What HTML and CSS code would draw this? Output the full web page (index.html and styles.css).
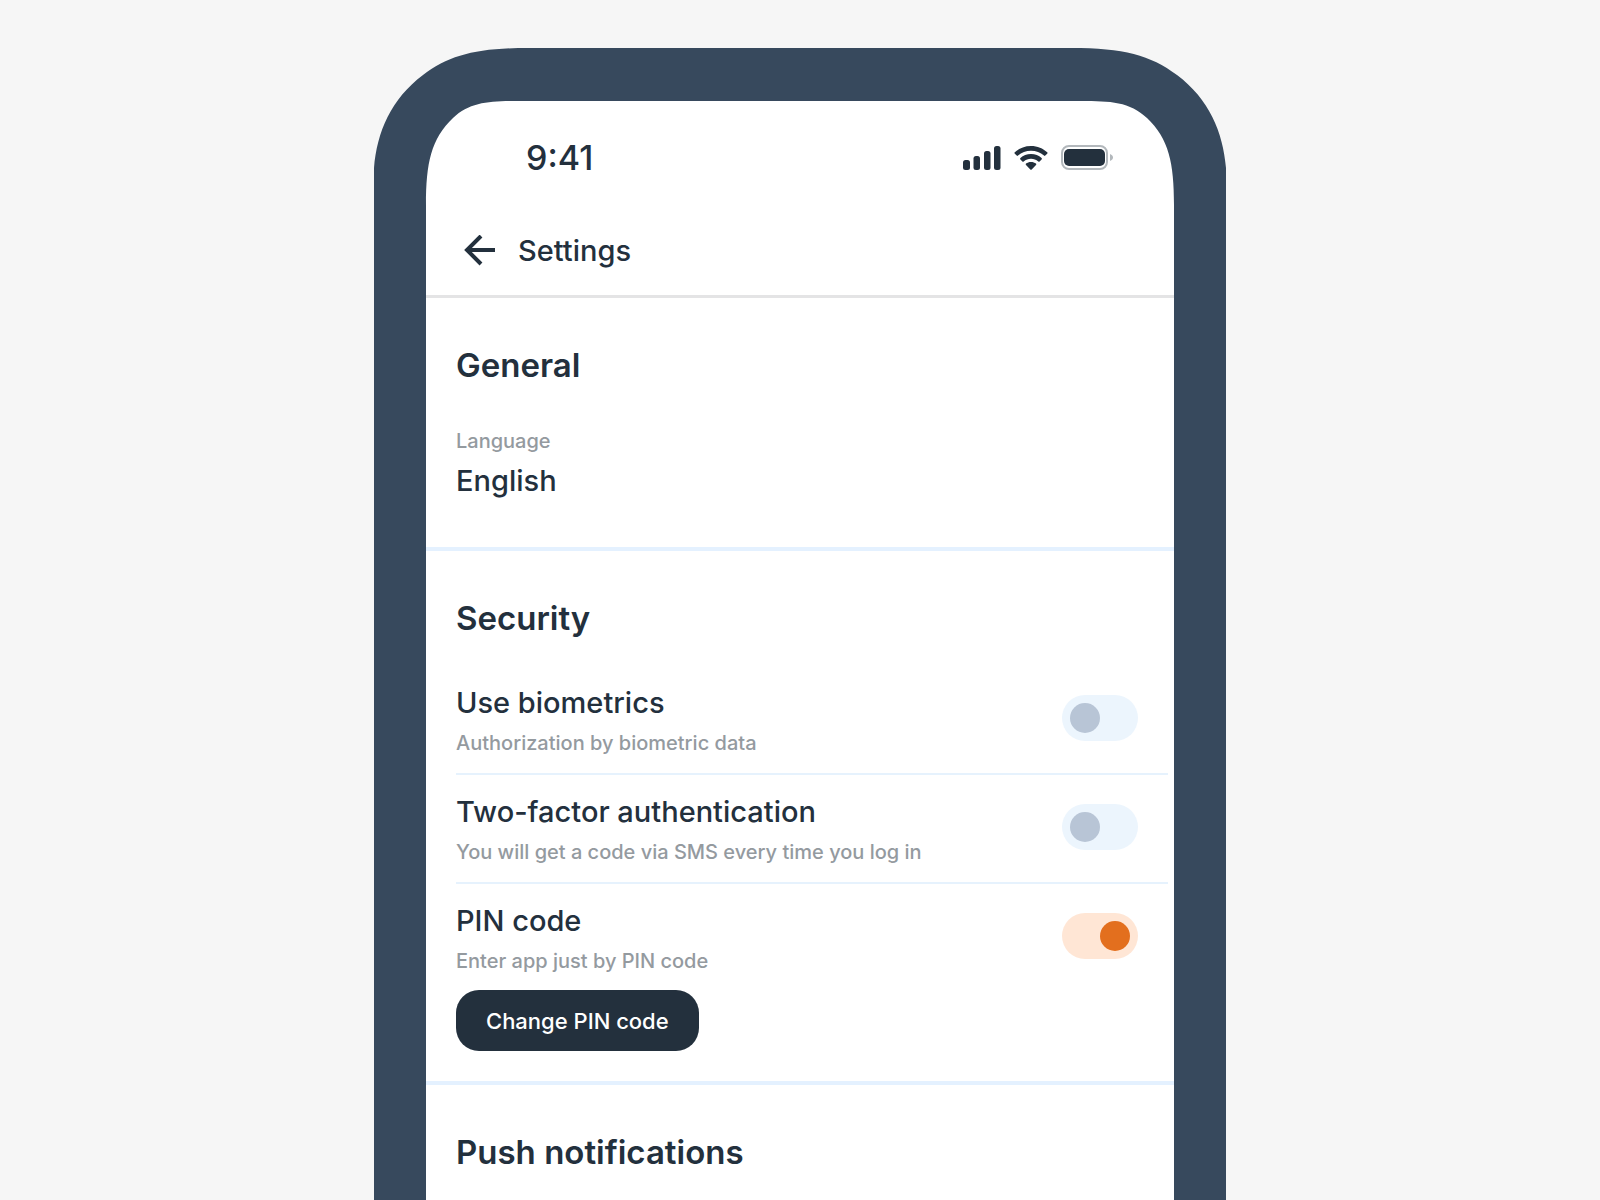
FILE: index.html
```html
<!DOCTYPE html>
<html lang="en">
<head>
    <meta charset="UTF-8">
    <meta name="viewport" content="width=device-width, initial-scale=1.0">
    <title>Settings</title>
    <link rel="stylesheet" href="styles.css">
</head>
<body>
    <div class="phone">
        <svg class="corner" viewBox="0 0 160 160" aria-hidden="true">
            <path class="corner-case" d="M0 160V120C3 84 17 51 49 27C76 7 102 0 155 0H160V53H155C120 53 98 52 79 70C57 91 52 115 52 157V160Z"/>
        </svg>
        <svg class="corner corner-right" viewBox="0 0 160 160" aria-hidden="true">
            <path class="corner-case" d="M0 160V120C3 84 17 51 49 27C76 7 102 0 155 0H160V53H155C120 53 98 52 79 70C57 91 52 115 52 157V160Z"/>
        </svg>

        <div class="screen">
            <div class="status-bar">
                <span class="time">9:41</span>
                <div class="status-icons">
                    <svg width="38" height="24" viewBox="0 0 38 24" aria-hidden="true">
                        <rect x="0" y="14" width="7" height="10" rx="2.500"/>
                        <rect x="10.500" y="10" width="6.500" height="14" rx="2.500"/>
                        <rect x="21" y="5" width="6.500" height="19" rx="2.500"/>
                        <rect x="31" y="0" width="6.500" height="24" rx="2.500"/>
                    </svg>
                    <svg width="34" height="24" viewBox="0 0 34 24" aria-hidden="true">
                        <path d="M17 0C23.500 0 29 2.400 33.200 6.300Q33.900 7 33.200 7.700L31.300 9.600Q30.700 10.200 30 9.600C26.400 6.400 22 4.800 17 4.800S7.600 6.400 4 9.600Q3.300 10.200 2.700 9.600L.8 7.700Q.1 7 .8 6.300C5 2.400 10.500 0 17 0Z"/>
                        <path d="M17 8C21.200 8 24.800 9.500 27.600 12Q28.300 12.700 27.600 13.400L25.600 15.400Q25 16 24.300 15.400C22.200 13.700 19.800 12.800 17 12.800S11.800 13.700 9.700 15.400Q9 16 8.400 15.400L6.400 13.400Q5.700 12.700 6.400 12C9.200 9.500 12.800 8 17 8Z"/>
                        <path d="M17 16C19 16 20.700 16.600 22 17.600Q22.700 18.300 22 19L17.700 23.400Q17 24 16.300 23.400L12 19Q11.300 18.300 12 17.600C13.300 16.600 15 16 17 16Z"/>
                    </svg>
                    <svg width="52" height="26" viewBox="0 0 52 26" aria-hidden="true">
                        <rect class="battery-case" x="1" y="1" width="45" height="23" rx="7"/>
                        <rect x="3" y="4" width="41" height="17" rx="5"/>
                        <path class="battery-cap" d="M49 9C51 10 52 11 52 12.500S51 15 49 16Z"/>
                    </svg>
                </div>
            </div>

            <header class="app-header">
                <button class="back" type="button" aria-label="Back">
                    <svg width="32" height="32" viewBox="0 0 32 32" aria-hidden="true">
                        <path d="M17 1L3 15L17 29M3 15H31"/>
                    </svg>
                </button>
                <h1 class="app-title">Settings</h1>
            </header>

            <main>
                <section class="section">
                    <h2 class="section-title">General</h2>
                    <div class="field">
                        <div class="hint">Language</div>
                        <div class="name">English</div>
                    </div>
                </section>

                <section class="section section-security">
                    <h2 class="section-title">Security</h2>
                    <div class="row">
                        <div>
                            <label class="name" for="biometrics">Use biometrics</label>
                            <div class="hint">Authorization by biometric data</div>
                        </div>
                        <input class="toggle" type="checkbox" id="biometrics">
                    </div>
                    <div class="row">
                        <div>
                            <label class="name" for="twofactor">Two-factor authentication</label>
                            <div class="hint">You will get a code via SMS every time you log in</div>
                        </div>
                        <input class="toggle" type="checkbox" id="twofactor">
                    </div>
                    <div class="row">
                        <div>
                            <label class="name" for="pin">PIN code</label>
                            <div class="hint">Enter app just by PIN code</div>
                        </div>
                        <input class="toggle" type="checkbox" id="pin" checked>
                    </div>
                    <button class="change-pin" type="button">Change PIN code</button>
                </section>

                <section class="section">
                    <h2 class="section-title">Push notifications</h2>
                </section>
            </main>
        </div>
    </div>
</body>
</html>
```

FILE: styles.css
```css
* {
    box-sizing: border-box;
}
body {
    margin: 0;
    height: 100vh;
    padding-top: 48px;
    overflow: hidden;
    background: #f6f6f6;
    color: #23303d;
    font-family: Inter, "Liberation Sans", sans-serif;
    font-weight: 500;
}
h1, h2 {
    margin: 0;
}

/* phone case, its rounded corners are drawn by the two svgs */
.phone {
    position: relative;
    max-width: 852px;
    min-height: 100%;
    margin: 0 auto;
    padding: 53px 52px 0;
    background: linear-gradient(#37495d, #37495d) center / calc(100% - 316px) 100% no-repeat, linear-gradient(#37495d, #37495d) 0 158px / 100% 100% no-repeat;
}
.corner {
    position: absolute;
    top: 0;
    left: 0;
    width: 160px;
    height: 160px;
}
.corner-right {
    left: auto;
    right: 0;
    transform: scaleX(-1);
}
.corner-case {
    fill: #37495d;
}
.screen {
    border-radius: 60px 60px 0 0;
    background: #fff;
}

/* status bar */
.status-bar {
    display: flex;
    align-items: center;
    justify-content: space-between;
    height: 112px;
    padding: 0 61px 0 100px;
}
.time {
    font-size: 34px;
}
.status-icons {
    display: flex;
    align-items: center;
    gap: 13px;
    padding-top: 2px;
    fill: #23303d;
}
.battery-case {
    fill: none;
    stroke: #b3b8bc;
    stroke-width: 2;
}
.battery-cap {
    fill: #b3b8bc;
}

/* header */
.app-header {
    display: flex;
    align-items: center;
    gap: 22px;
    height: 85px;
    padding: 0 30px 7px 38px;
    border-bottom: 3px solid #e4e4e5;
}
.back {
    display: flex;
    padding: 0;
    border: none;
    background: none;
    cursor: pointer;
}
.back path {
    fill: none;
    stroke: #23303d;
    stroke-width: 4;
}
.app-title {
    font-size: 29px;
    font-weight: 500;
}

/* sections */
.section {
    padding: 42px 30px 41px;
    border-bottom: 4px solid #e4f1ff;
}
.section-security {
    padding-right: 6px;
    padding-bottom: 30px;
}
.section-title {
    margin-bottom: 23px;
    font-size: 33px;
    font-weight: 600;
    line-height: 50px;
}
.field {
    padding-top: 13px;
}
.name {
    display: block;
    font-size: 29px;
    line-height: 50px;
}
.hint {
    color: #949a9f;
    font-size: 20px;
    line-height: 30px;
}
.row {
    display: flex;
    align-items: center;
    justify-content: space-between;
    gap: 20px;
    padding: 12px 30px 15px 0;
    border-bottom: 2px solid #e6f2fd;
}
.row:last-of-type {
    padding-bottom: 14px;
    border-bottom: none;
}

/* controls */
.toggle {
    display: flex;
    flex: none;
    align-items: center;
    width: 76px;
    height: 46px;
    margin: 0;
    padding: 0 8px;
    border-radius: 23px;
    background: #ecf5fd;
    appearance: none;
    cursor: pointer;
}
.toggle::before {
    content: "";
    width: 30px;
    height: 30px;
    border-radius: 50%;
    background: #b8c5d6;
}
.toggle:checked {
    justify-content: flex-end;
    background: #ffe6d5;
}
.toggle:checked::before {
    background: #e36f1e;
}
.change-pin {
    display: block;
    height: 61px;
    padding: 0 30px;
    border: none;
    border-radius: 23px;
    background: #23303d;
    color: #fff;
    font: 500 22px Inter, "Liberation Sans", sans-serif;
    cursor: pointer;
}
```
